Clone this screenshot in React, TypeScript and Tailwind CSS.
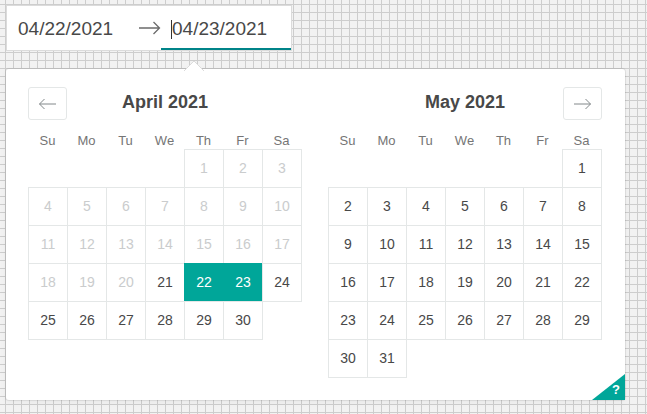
const WEEKDAYS = ["Su", "Mo", "Tu", "We", "Th", "Fr", "Sa"]

interface MonthProps {
    title: string
    offset: number
    days: number
    nav: "prev" | "next"
    disabledBefore?: number
    selected?: number[]
}

function NavArrow({ dir }: { dir: "prev" | "next" }) {
    return (
        <svg width="19" height="12" viewBox="0 0 19 12" fill="none" stroke="#82888a" strokeWidth="1">
            {dir === "prev" ? <path d="M18 6H1.5M6.5 1L1.5 6l5 5" /> : <path d="M1 6h16.5M12.5 1l5 5-5 5" />}
        </svg>
    )
}

function Month({ title, offset, days, nav, disabledBefore = 0, selected = [] }: MonthProps) {
    const cells: (number | null)[] = []
    for (let i = 0; i < offset; i++) cells.push(null)
    for (let d = 1; d <= days; d++) cells.push(d)

    return (
        <div className="w-[274px] pt-[18px]">
            {/* header */}
            <div className="grid h-[33px] grid-cols-[39px_1fr_39px] items-center">
                {nav === "prev" ? (
                    <button className="flex h-[33px] w-[39px] items-center justify-center rounded-[3px] border border-[#e4e7e7] bg-white">
                        <NavArrow dir="prev" />
                    </button>
                ) : (
                    <div />
                )}
                <div className="pb-[3px] text-center text-[18px] font-bold text-[#484848]">{title}</div>
                {nav === "next" ? (
                    <button className="flex h-[33px] w-[39px] items-center justify-center rounded-[3px] border border-[#e4e7e7] bg-white">
                        <NavArrow dir="next" />
                    </button>
                ) : (
                    <div />
                )}
            </div>

            {/* weekdays */}
            <div className="grid h-[29px] grid-cols-[repeat(7,39px)] items-end">
                {WEEKDAYS.map((w) => (
                    <div key={w} className="text-center text-[13px] leading-[16px] text-[#757575]">
                        {w}
                    </div>
                ))}
            </div>

            {/* days */}
            <div className="grid grid-cols-[repeat(7,39px)] auto-rows-[38px]">
                {cells.map((d, i) => {
                    if (d === null) return <div key={i} />
                    const isSel = selected.includes(d)
                    const isOff = d < disabledBefore
                    return (
                        <div
                            key={i}
                            className={
                                "flex h-[39px] w-[40px] items-center justify-center border text-[14px] " +
                                (isSel
                                    ? "border-[#00a699] bg-[#00a699] text-white"
                                    : isOff
                                    ? "border-[#e4e7e7] bg-white text-[#cacccd]"
                                    : "border-[#e4e7e7] bg-white text-[#484848]")
                            }
                        >
                            {d}
                        </div>
                    )
                })}
            </div>
        </div>
    )
}

export default function App() {
    return (
        <div className="relative h-screen w-full bg-[#f2f2f2] bg-[linear-gradient(to_right,#cdcdcd_1px,transparent_1px),linear-gradient(to_bottom,#cdcdcd_1px,transparent_1px)] bg-size-[8px_8px] bg-position-[5px_4px] pl-[6px] pt-[5px] font-[Liberation_Sans,Arial,sans-serif]">
            {/* inputs */}
            <div className="inline-flex border border-[#dbdbdb] bg-white">
                <div className="h-[44px] w-[130px] px-[11px] pb-[9px] pt-[11px] text-[19px] leading-[24px] text-[#484848]">
                    04/22/2021
                </div>
                <div className="flex h-[44px] w-[24px] items-center justify-center">
                    <svg width="23" height="14" viewBox="0 0 23 14" fill="none" stroke="#6b6b6b" strokeWidth="1.3">
                        <path d="M1 7h20.5M15.5 1l6 6-6 6" />
                    </svg>
                </div>
                <div className="relative h-[44px] w-[130px] border-b-2 border-[#008489] px-[11px] pb-[7px] pt-[11px] text-[19px] leading-[24px] text-[#484848]">
                    <span className="absolute left-[10px] top-[14px] h-[19px] w-px bg-[#333]" />
                    04/23/2021
                </div>
            </div>

            {/* fang */}
            <svg className="absolute left-[184px] top-[61px] z-10" width="20" height="10" viewBox="0 0 20 10">
                <path d="M0 10L10 0L20 10Z" fill="#fff" />
                <path d="M0 10L10 0L20 10" fill="none" stroke="#dbdbdb" />
            </svg>

            {/* calendar */}
            <div className="relative mt-[18px] h-[331px] w-[619px] rounded-[3px] bg-white shadow-[0_2px_6px_rgba(0,0,0,0.05),0_0_0_1px_rgba(0,0,0,0.07)]">
                <div className="flex gap-[26px] px-[22px]">
                    <Month title="April 2021" offset={4} days={30} nav="prev" disabledBefore={21} selected={[22, 23]} />
                    <Month title="May 2021" offset={6} days={31} nav="next" />
                </div>

                {/* keyboard shortcuts */}
                <div className="absolute bottom-0 right-0 h-0 w-0 border-r-[33px] border-t-[26px] border-r-[#00a699] border-t-transparent" />
                <span className="absolute bottom-[3px] right-[5px] text-[13px] font-bold leading-[14px] text-white">?</span>
            </div>
        </div>
    )
}
